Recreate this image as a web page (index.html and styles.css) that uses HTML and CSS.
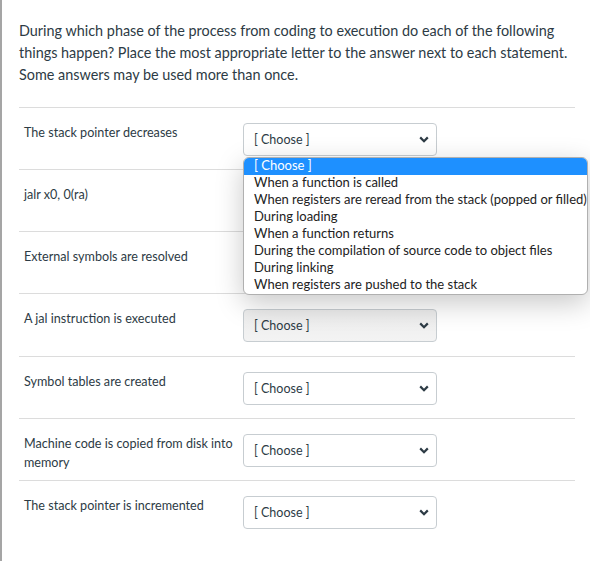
FILE: index.html
```html
<!DOCTYPE html>
<html>
<head>
<meta charset="utf-8">
<link rel="stylesheet" href="styles.css">
</head>
<body>
<div class="page">
  <p class="question">During which phase of the process from coding to execution do each of the following things happen? Place the most appropriate letter to the answer next to each statement. Some answers may be used more than once.</p>
  <div class="rows">
    <div class="row">
      <div class="label">The stack pointer decreases</div>
      <div class="select-wrap">
        <div class="select"><span>[ Choose ]</span><svg class="chev" width="10" height="7" viewBox="0 0 10 7"><path d="M1.2 1.4 L5 5.2 L8.8 1.4" fill="none" stroke="#2d3b45" stroke-width="2.2"/></svg></div>
        <div class="popup">
          <div class="opt active">[ Choose ]</div>
          <div class="opt">When a function is called</div>
          <div class="opt">When registers are reread from the stack (popped or filled)</div>
          <div class="opt">During loading</div>
          <div class="opt">When a function returns</div>
          <div class="opt">During the compilation of source code to object files</div>
          <div class="opt">During linking</div>
          <div class="opt">When registers are pushed to the stack</div>
        </div>
      </div>
    </div>
    <div class="row">
      <div class="label">jalr x0, 0(ra)</div>
      <div class="select-wrap">
        <div class="select"><span>[ Choose ]</span><svg class="chev" width="10" height="7" viewBox="0 0 10 7"><path d="M1.2 1.4 L5 5.2 L8.8 1.4" fill="none" stroke="#2d3b45" stroke-width="2.2"/></svg></div>
      </div>
    </div>
    <div class="row">
      <div class="label">External symbols are resolved</div>
      <div class="select-wrap">
        <div class="select"><span>[ Choose ]</span><svg class="chev" width="10" height="7" viewBox="0 0 10 7"><path d="M1.2 1.4 L5 5.2 L8.8 1.4" fill="none" stroke="#2d3b45" stroke-width="2.2"/></svg></div>
      </div>
    </div>
    <div class="row">
      <div class="label">A jal instruction is executed</div>
      <div class="select-wrap">
        <div class="select shaded"><span>[ Choose ]</span><svg class="chev" width="10" height="7" viewBox="0 0 10 7"><path d="M1.2 1.4 L5 5.2 L8.8 1.4" fill="none" stroke="#2d3b45" stroke-width="2.2"/></svg></div>
      </div>
    </div>
    <div class="row">
      <div class="label">Symbol tables are created</div>
      <div class="select-wrap">
        <div class="select"><span>[ Choose ]</span><svg class="chev" width="10" height="7" viewBox="0 0 10 7"><path d="M1.2 1.4 L5 5.2 L8.8 1.4" fill="none" stroke="#2d3b45" stroke-width="2.2"/></svg></div>
      </div>
    </div>
    <div class="row">
      <div class="label">Machine code is copied from disk into memory</div>
      <div class="select-wrap">
        <div class="select"><span>[ Choose ]</span><svg class="chev" width="10" height="7" viewBox="0 0 10 7"><path d="M1.2 1.4 L5 5.2 L8.8 1.4" fill="none" stroke="#2d3b45" stroke-width="2.2"/></svg></div>
      </div>
    </div>
    <div class="row">
      <div class="label">The stack pointer is incremented</div>
      <div class="select-wrap">
        <div class="select"><span>[ Choose ]</span><svg class="chev" width="10" height="7" viewBox="0 0 10 7"><path d="M1.2 1.4 L5 5.2 L8.8 1.4" fill="none" stroke="#2d3b45" stroke-width="2.2"/></svg></div>
      </div>
    </div>
  </div>
</div>
</body>
</html>
```
FILE: styles.css
```css
html, body {
  margin: 0;
  padding: 0;
  background: #fff;
}
body {
  font-family: Lato, "Noto Sans", sans-serif;
  color: #2d3b45;
  width: 590px;
  height: 561px;
  overflow: hidden;
}
.page {
  border-left: 2px solid #a5a5a5;
  padding: 20px 15px 0 17px;
  height: 561px;
  box-sizing: border-box;
}
.question {
  margin: 0 0 21px 0;
  font-size: 14.4px;
  line-height: 22px;
}
.rows {
  display: flex;
  flex-direction: column;
}
.row {
  border-top: 1px solid #dcdcdc;
  height: 62.17px;
  box-sizing: border-box;
  padding: 15px 0 0 5px;
  display: flex;
  gap: 8px;
  align-items: flex-start;
}
.label {
  width: 211px;
  font-size: 12.6px;
  line-height: 19px;
}
.select-wrap {
  position: relative;
}
.select {
  width: 194px;
  height: 33px;
  box-sizing: border-box;
  border: 1px solid #c7cdd1;
  border-radius: 4px;
  background: #fff;
  display: flex;
  align-items: center;
  justify-content: space-between;
  padding: 0 7px 0 10px;
  font-size: 12.5px;
}
.select.shaded {
  background: linear-gradient(#ececec, #f3f3f3);
}
.chev {
  display: block;
}
.popup {
  position: absolute;
  left: 0;
  top: 34px;
  width: 345px;
  box-sizing: border-box;
  background: #fff;
  border: 1px solid #b0b0b0;
  border-radius: 6px;
  overflow: hidden;
  box-shadow: 0 8px 28px rgba(0, 0, 0, 0.22);
  z-index: 10;
  font-size: 13px;
  color: #222;
}
.opt {
  height: 17px;
  line-height: 14px;
  padding-left: 10px;
  white-space: nowrap;
}
.opt.active {
  background: #1e90ff;
  color: #fff;
}
```
